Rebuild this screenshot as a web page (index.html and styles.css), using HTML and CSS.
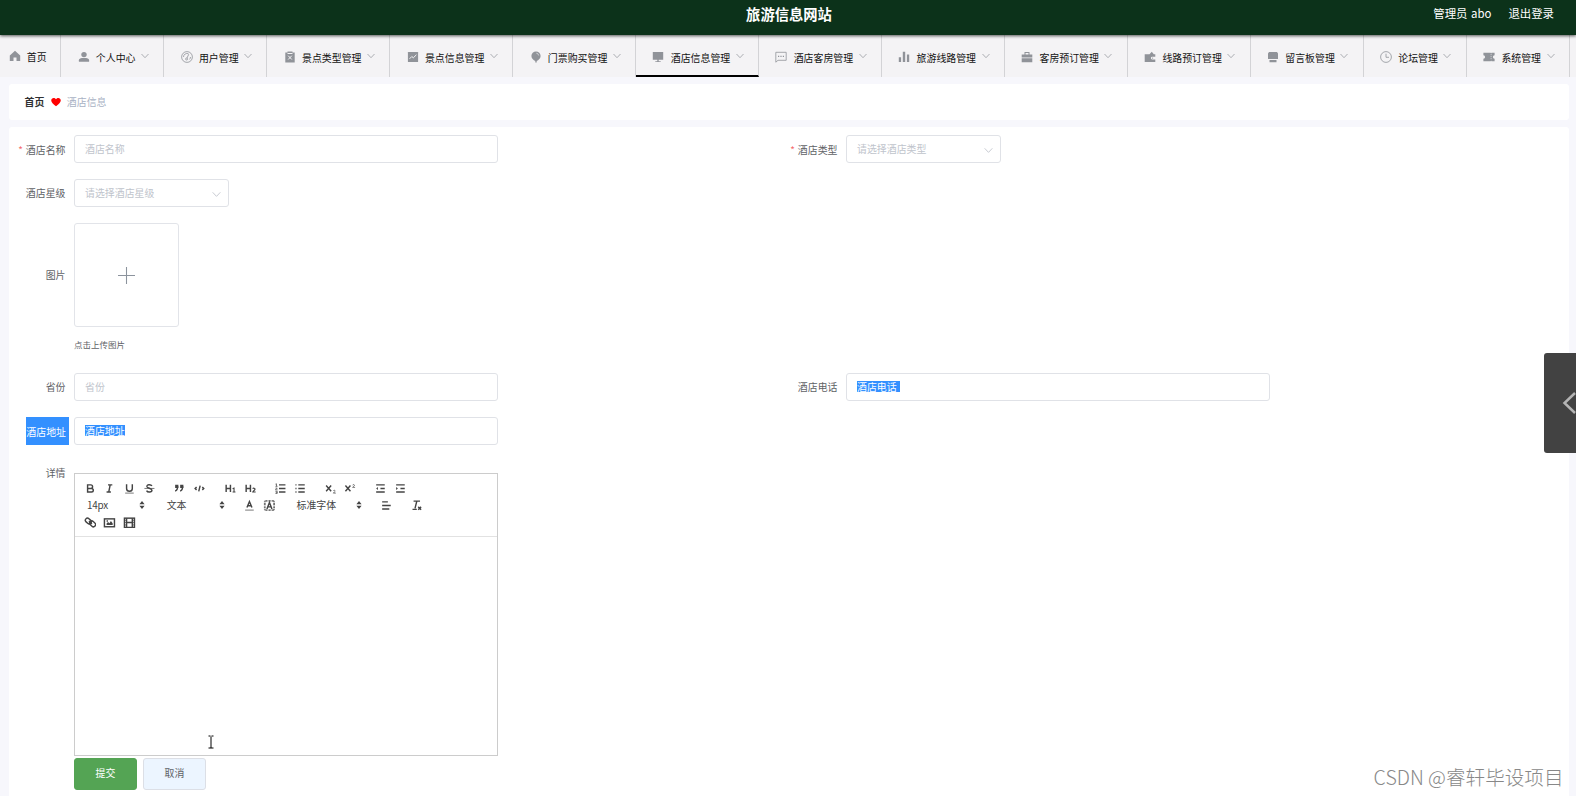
FILE: index.html
```html
<!DOCTYPE html>
<html lang="zh-CN">
  <head>
    <meta charset="UTF-8" />
    <meta name="viewport" content="width=device-width, initial-scale=1.0" />
    <title>旅游信息网站</title>
    <link rel="stylesheet" href="styles.css">
  </head>
  <body>
    <svg class="defs">
      <symbol id="arrow" viewBox="0 0 10 10">
        <path d="M1.5 3L5 6.7 8.5 3" fill="none" stroke="currentColor" stroke-width="0.8" />
      </symbol>
      <symbol id="updown" viewBox="0 0 6 10">
        <path d="M.4 4.2L3 1l2.600 3.200zM.4 5.800h5.200L3 9z" fill="currentColor" />
      </symbol>
    </svg>

    <header class="header">
      <h1 class="title">旅游信息网站</h1>
      <div class="user-info">
        <span>管理员 abo</span>
        <a class="logout">退出登录</a>
      </div>
    </header>

    <nav class="menu">
      <a class="menu-item home">
        <svg class="menu-icon" viewBox="0 0 12 12"><path d="M6 .8L11.2 5.6V11H7.5V7.6h-3V11H.8V5.6z" /></svg>
        <span>首页</span>
      </a>
      <a class="menu-item">
        <svg class="menu-icon" viewBox="0 0 12 12"><circle cx="6" cy="3.600" r="2.700" /><path d="M.9 10.800V9.300C.9 7.800 2.300 7.300 4 7h4c1.700.3 3.100.8 3.100 2.300v1.500z" /></svg>
        <span>个人中心</span>
        <svg class="menu-arrow"><use href="#arrow" /></svg>
      </a>
      <a class="menu-item">
        <svg class="menu-icon line" viewBox="0 0 12 12"><circle cx="6" cy="6" r="5.400" /><path d="M2.500 6a3.500 3.500 0 0 1 5-3.200M9.500 6a3.500 3.500 0 0 1-1 2.400M6 7L7.800 3.200" /><circle cx="5.600" cy="8" r="1" /></svg>
        <span>用户管理</span>
        <svg class="menu-arrow"><use href="#arrow" /></svg>
      </a>
      <a class="menu-item">
        <svg class="menu-icon" viewBox="0 0 12 12"><path d="M1.300 1.500H3.500V.5h5v1h2.200v10H1.300z" /><path class="cut" d="M4.200 4.700l3.600 3.800M7.800 4.700L4.200 8.500M3.500 2.500h5" /></svg>
        <span>景点类型管理</span>
        <svg class="menu-arrow"><use href="#arrow" /></svg>
      </a>
      <a class="menu-item">
        <svg class="menu-icon" viewBox="0 0 12 12"><rect x=".9" y=".9" width="10.200" height="10.200" rx=".5" /><path class="cut" d="M2.600 7.800L4.800 5.500l1.500 1.300L9.400 3.800" /></svg>
        <span>景点信息管理</span>
        <svg class="menu-arrow"><use href="#arrow" /></svg>
      </a>
      <a class="menu-item">
        <svg class="menu-icon" viewBox="0 0 12 12"><path d="M6 .4a4.600 4.600 0 0 1 4.600 4.600C10.600 7.400 8.500 9.300 6.700 9.900v1.600H5.300V9.900C3.500 9.300 1.400 7.400 1.400 5A4.600 4.600 0 0 1 6 .4z" /><path class="cut thin" d="M6.300 2.200a2.600 2.600 0 0 1 2.400 2.300" /></svg>
        <span>门票购买管理</span>
        <svg class="menu-arrow"><use href="#arrow" /></svg>
      </a>
      <a class="menu-item active">
        <svg class="menu-icon" viewBox="0 0 12 12"><path d="M.8 1.100h10.400v7.700H.8zM5.300 8.800h1.400v1.400h2v.9H3.300v-.9h2z" /></svg>
        <span>酒店信息管理</span>
        <svg class="menu-arrow"><use href="#arrow" /></svg>
      </a>
      <a class="menu-item">
        <svg class="menu-icon line" viewBox="0 0 12 12"><path d="M.8 1.300h10.400v8H3L.8 11.200z" /><path d="M3 5.300h1.200M5.400 5.300h1.200M7.800 5.300H9" stroke-width="1.200" /></svg>
        <span>酒店客房管理</span>
        <svg class="menu-arrow"><use href="#arrow" /></svg>
      </a>
      <a class="menu-item">
        <svg class="menu-icon" viewBox="0 0 12 12"><path d="M.8 6.200h2.300V11H.8zM4.800.8h2.400V11H4.800zM8.900 3.500h2.300V11H8.900z" /></svg>
        <span>旅游线路管理</span>
        <svg class="menu-arrow"><use href="#arrow" /></svg>
      </a>
      <a class="menu-item">
        <svg class="menu-icon" viewBox="0 0 12 12"><path d="M3.500 3.500V1h5v2.500h2.800v3H.7v-3zM4.500 3.500h3V2h-3zM.7 7.300h10.600v3.900H.7z" fill-rule="evenodd" /></svg>
        <span>客房预订管理</span>
        <svg class="menu-arrow"><use href="#arrow" /></svg>
      </a>
      <a class="menu-item">
        <svg class="menu-icon" viewBox="0 0 12 12"><path d="M.7 3.200h4.800L7.800.8l2 2.400h1.500v2.600H8.200a1.300 1.300 0 0 0 0 2.600h3.100v2.700H.7z" /><circle cx="8.600" cy="7.100" r=".6" /></svg>
        <span>线路预订管理</span>
        <svg class="menu-arrow"><use href="#arrow" /></svg>
      </a>
      <a class="menu-item">
        <svg class="menu-icon" viewBox="0 0 12 12"><path d="M2 .9h8l1 1.500V8H1V2.400zM2.500 8.900h7v2.300h-7z" /></svg>
        <span>留言板管理</span>
        <svg class="menu-arrow"><use href="#arrow" /></svg>
      </a>
      <a class="menu-item">
        <svg class="menu-icon line" viewBox="0 0 12 12"><circle cx="6" cy="6" r="5.400" /><path d="M6 2.700V6.300h3" /></svg>
        <span>论坛管理</span>
        <svg class="menu-arrow"><use href="#arrow" /></svg>
      </a>
      <a class="menu-item">
        <svg class="menu-icon" viewBox="0 0 12 12"><path d="M.4 1.700h7.300l.4.900.4-.9h3.100v2.600a1.700 1.700 0 0 0 0 3.400v2.600H8.500l-.4-.9-.4.900H.4V7.700a1.700 1.700 0 0 0 0-3.400z" /><path class="cut thin" d="M8.100 3v6" stroke-dasharray="1.200 .8" /></svg>
        <span>系统管理</span>
        <svg class="menu-arrow"><use href="#arrow" /></svg>
      </a>
    </nav>

    <main class="main">
      <div class="breadcrumb">
        <span class="crumb-home">首页</span>
        <svg class="heart" viewBox="0 0 10 10"><path d="M5 9.300C2.200 7.200.2 5.600.2 3.300.2.800 3.500 0 5 2.200 6.500 0 9.800.8 9.800 3.300 9.800 5.600 7.800 7.200 5 9.300z" /></svg>
        <span class="crumb-current">酒店信息</span>
      </div>

      <form class="card">
        <div class="row">
          <div class="form-item">
            <label class="required">酒店名称</label>
            <input class="input" type="text" placeholder="酒店名称" />
          </div>
          <div class="form-item">
            <label class="required">酒店类型</label>
            <div class="input select">
              <span>请选择酒店类型</span>
              <svg class="select-arrow"><use href="#arrow" /></svg>
            </div>
          </div>
        </div>

        <div class="row">
          <div class="form-item">
            <label>酒店星级</label>
            <div class="input select">
              <span>请选择酒店星级</span>
              <svg class="select-arrow"><use href="#arrow" /></svg>
            </div>
          </div>
        </div>

        <div class="row upload-row">
          <div class="form-item">
            <label>图片</label>
            <div class="upload">
              <svg viewBox="0 0 16 16"><path d="M8 0v16M0 8h16" /></svg>
            </div>
          </div>
          <div class="upload-tip">点击上传图片</div>
        </div>

        <div class="row">
          <div class="form-item">
            <label>省份</label>
            <input class="input" type="text" placeholder="省份" />
          </div>
          <div class="form-item">
            <label>酒店电话</label>
            <div class="input"><span class="selected with-tail">酒店电话</span></div>
          </div>
        </div>

        <div class="row">
          <div class="form-item">
            <label class="selected-label">酒店地址</label>
            <div class="input"><span class="selected">酒店地址</span></div>
          </div>
        </div>

        <div class="form-item editor-item">
          <label>详情</label>
          <div class="editor">
            <div class="toolbar">
              <div class="formats">
                <span class="group">
                  <svg viewBox="0 0 18 18"><path d="M5 4h4.500a2.500 2.500 0 0 1 0 5H5zM5 9h5.500a2.500 2.500 0 0 1 0 5H5z" /></svg>
                  <svg viewBox="0 0 18 18"><path d="M7 4h6M5 14h6M8 14l2-10" /></svg>
                  <svg viewBox="0 0 18 18"><path d="M5 3v6a4 4 0 0 0 8 0V3" /><path class="slim" d="M3 15.500h12" /></svg>
                  <svg viewBox="0 0 18 18"><path class="slim" d="M2 9h14" /><path d="M12.500 5.500C11 3 5 3 5.500 6.500 6 9 12.500 8.500 12.500 11.500c0 3-6 3.500-7.500.5" /></svg>
                </span>
                <span class="group">
                  <svg viewBox="0 0 18 18"><path class="solid" d="M3 4h4.500v4.500H3zM10 4h4.500v4.500H10z" /><path d="M6.500 6c0 4-1 6-3.500 6.500M13.500 6c0 4-1 6-3.500 6.500" /></svg>
                  <svg viewBox="0 0 18 18"><path d="M5 7L3 9l2 2M13 7l2 2-2 2M10 5L8 13" /></svg>
                </span>
                <span class="group">
                  <svg viewBox="0 0 18 18"><path d="M3 4v10M9 4v10M3 9h6" /><path class="mid" d="M12 9.500l2-1V14M12 14h4" /></svg>
                  <svg viewBox="0 0 18 18"><path d="M3 4v10M9 4v10M3 9h6" /><path class="mid" d="M12.300 9.500c.5-1.500 3.500-1 3 1-.3 1-2.500 2-3 3.500h4" /></svg>
                </span>
                <span class="group">
                  <svg viewBox="0 0 18 18"><path d="M7 4h9M7 9h9M7 14h9" /><path class="slim" d="M2 3l1.500-.5V6M2 6h3M2 8.500h2.500L2 11h3M2 13h2.500v3H2M2.500 14.500h2" /></svg>
                  <svg viewBox="0 0 18 18"><path d="M6 4h9M6 9h9M6 14h9M2 4h1.500M2 9h1.500M2 14h1.500" /></svg>
                </span>
                <span class="group">
                  <svg viewBox="0 0 18 18"><path d="M3 5l7 8M10 5l-7 8" /><path class="slim" d="M13 12.500c.5-1.500 3-1 2.500.5-.3.700-2 1.500-2.500 2.500h3.500" /></svg>
                  <svg viewBox="0 0 18 18"><path d="M2 5l7 8M9 5l-7 8" /><path class="slim" d="M12 4.500c.5-1.500 3-1 2.500.5-.3.700-2 1.500-2.500 2.500h3.500" /></svg>
                </span>
                <span class="group">
                  <svg viewBox="0 0 18 18"><path d="M3 14h12M3 4h12M9 9h6" /><path class="solid" d="M5.500 7v4L3 9z" /></svg>
                  <svg viewBox="0 0 18 18"><path d="M3 14h12M3 4h12M9 9h6" /><path class="solid" d="M3 7v4l2.500-2z" /></svg>
                </span>
              </div>
              <div class="formats">
                <span class="group picker"><span class="latin">14px</span><svg class="updown"><use href="#updown" /></svg></span>
                <span class="group picker"><span>文本</span><svg class="updown"><use href="#updown" /></svg></span>
                <span class="group">
                  <svg viewBox="0 0 18 18"><path class="slim" d="M3 15.500h12" /><path d="M5.500 12L9 3.500l3.500 8.500M6.800 9.500h4.400" /></svg>
                  <svg viewBox="0 0 18 18"><rect class="dots" x="2.500" y="2.500" width="13" height="13" /><path d="M5.500 14L9 5l3.500 9M6.800 11h4.400" /></svg>
                </span>
                <span class="group picker font"><span>标准字体</span><svg class="updown"><use href="#updown" /></svg></span>
                <span class="group"><svg viewBox="0 0 18 18"><path d="M3 4h8M3 9h12M3 14h10" /></svg></span>
                <span class="group"><svg viewBox="0 0 18 18"><path d="M5 3h9M9.500 3L7 13M3.500 14.500h6M11.500 11l4 4M15.500 11l-4 4" /></svg></span>
              </div>
              <div class="formats">
                <span class="group">
                  <svg viewBox="0 0 18 18"><rect x="1.500" y="4" width="9" height="6" rx="3" transform="rotate(42 6 7)" /><rect x="7.500" y="8" width="9" height="6" rx="3" transform="rotate(42 12 11)" /><path d="M7 7l4 4" /></svg>
                  <svg viewBox="0 0 18 18"><rect x="2" y="4" width="14" height="11" /><path class="solid" d="M5 12.500v-2l2-2 2 1.500 2-3 2.500 3v2.500zM5 6h2v2H5z" /></svg>
                  <svg viewBox="0 0 18 18"><rect x="2" y="3" width="14" height="13" /><path d="M5 3v13M13 3v13M5 9h8" /><path class="slim" d="M2 6h3M2 9h3M2 12.500h3M13 6h3M13 9h3M13 12.500h3" /></svg>
                </span>
              </div>
            </div>
            <div class="editor-body">
              <svg class="ibeam" viewBox="0 0 6 14"><path d="M.5 1H2.500M3.500 1H5.500M3 1.500V13M.5 13H5.500" /></svg>
            </div>
          </div>
        </div>

        <div class="buttons">
          <button class="btn submit" type="button">提交</button>
          <button class="btn cancel" type="button">取消</button>
        </div>
      </form>
    </main>

    <div class="drawer-handle">
      <svg viewBox="0 0 14 24"><path d="M13 2L2.500 12 13 22" /></svg>
    </div>
    <div class="watermark">CSDN @睿轩毕设项目</div>
  </body>
</html>
```
FILE: styles.css
```css
* {
  margin: 0;
  padding: 0;
  box-sizing: border-box;
}

body {
  height: 796px;
  overflow: hidden;
  background: #f7f7fc;
  color: #606266;
  font-family: "Noto Sans CJK SC", "Noto Sans", sans-serif;
  font-size: 9.92px;
  line-height: 1.4;
}

.defs {
  display: none;
}

/* header */
.header {
  position: relative;
  z-index: 1;
  display: grid;
  grid-template-columns: 1fr auto 1fr;
  align-items: center;
  height: 35px;
  padding: 0 22px 7px 24px;
  background: #0c321a;
  color: #fff;
  box-shadow: 0 1px 3px rgba(0, 0, 0, 0.65);
}

.title {
  grid-column: 2;
  font-size: 14.3px;
  font-weight: 700;
}

.user-info {
  display: flex;
  justify-content: flex-end;
  gap: 17px;
  font-size: 11.4px;
  word-spacing: 1px;
}

/* menu */
.menu {
  display: flex;
  height: 42px;
  background: #f4f3f5;
  color: #111;
}

.menu-item {
  display: flex;
  flex: none;
  align-items: center;
  height: 42px;
  padding: 3px 14.1px 0 16.25px;
  border-right: 1px solid #d3d3d6;
  white-space: nowrap;
}

.menu-item.home {
  width: 61.3px;
  padding: 2px 0 0 8.5px;
}

.menu-item.active {
  border-bottom: 2px solid #000;
  padding-top: 5px;
}

.menu-icon {
  flex: none;
  width: 12px;
  height: 12px;
  margin: -2px 6.3px 0 0;
  fill: #909399;
}

.menu-icon.line {
  fill: none;
  stroke: #909399;
  stroke-width: 0.8;
}

.menu-icon .cut {
  fill: none;
  stroke: #f4f3f5;
  stroke-width: 1;
}

.menu-icon .thin {
  stroke-width: 0.6;
}

.menu-arrow {
  flex: none;
  width: 10px;
  height: 10px;
  margin: -4px -0.7px 0 4.5px;
  color: #999ca2;
}

/* content */
.main {
  display: flex;
  flex-direction: column;
  gap: 7px;
  padding: 7px 7px 0 9px;
}

.breadcrumb {
  display: flex;
  align-items: center;
  height: 36px;
  padding: 0 15.5px;
  border-radius: 3px;
  background: #fff;
}

.crumb-home {
  color: #303133;
  font-weight: 700;
}

.heart {
  width: 10px;
  height: 10px;
  margin: 0 6px 0 6.5px;
  fill: #f00;
}

.crumb-current {
  color: #a9b2c4;
}

.card {
  height: 669px;
  padding: 8px 9px 0;
  border-radius: 3px 3px 0 0;
  background: #fff;
}

.row {
  display: grid;
  grid-template-columns: 772px 1fr;
  height: 44px;
}

.upload-row {
  grid-template-rows: 104px auto;
  height: 150px;
}

.form-item {
  display: flex;
  align-items: flex-start;
}

.form-item label {
  display: flex;
  flex: none;
  align-items: center;
  justify-content: flex-end;
  width: 56px;
  height: 28px;
  padding: 0 8.5px 0 0;
  white-space: nowrap;
}

.form-item .required {
  padding-top: 1px;
}

.required::before {
  content: "*";
  margin-right: 3px;
  color: #f56c6c;
}

.input {
  display: flex;
  align-items: center;
  width: 424px;
  height: 28px;
  padding: 0 10px 1px;
  border: 1px solid #e0e2e7;
  border-radius: 3px;
  background: #fff;
  font-family: inherit;
  font-size: 9.92px;
}

.input::placeholder {
  color: #c0c4cc;
}

.select {
  justify-content: space-between;
  width: 155px;
  padding-right: 6px;
  color: #c0c4cc;
}

.select-arrow {
  width: 11px;
  height: 11px;
  margin-top: 3px;
}

.selected {
  height: 11px;
  background: #3390ff;
  color: #fff;
  line-height: 11px;
}

.with-tail {
  padding-right: 3px;
}

/* label highlighted up to its padding edge */
.form-item .selected-label {
  width: 43px;
  margin: 0 5px 0 8px;
  padding: 1px 3px 0 0;
  background: #3390ff;
  color: #fff;
}

.upload-row .form-item {
  align-items: center;
}

.upload {
  display: flex;
  align-items: center;
  justify-content: center;
  width: 105px;
  height: 104px;
  border: 1px solid #e2e4e9;
  border-radius: 3px;
}

.upload svg {
  width: 17px;
  height: 17px;
  stroke: #8c939d;
}

.upload-tip {
  grid-row: 2;
  padding: 12px 0 0 56px;
  font-size: 8.5px;
}

/* rich text editor */
.editor-item {
  margin-top: 12px;
}

.editor-item label {
  height: 0;
}

.editor {
  width: 424px;
  height: 283px;
  border: 1px solid #ccc;
}

.toolbar {
  height: 63px;
  padding: 6px 5px 0;
  border-bottom: 1px solid #e2e2e2;
  color: #444;
}

.formats {
  display: flex;
  height: 16.8px;
}

.group {
  display: flex;
  flex: none;
  align-items: center;
  margin-right: 10.4px;
}

.group svg {
  width: 12.9px;
  height: 12.9px;
  margin: 0 3.5px;
  fill: none;
  stroke: #444;
  stroke-width: 2;
}

.group .slim {
  stroke-width: 1;
}

.group .mid {
  stroke-width: 1.5;
}

.group .solid {
  fill: #444;
  stroke: none;
}

.group .dots {
  stroke-width: 2.5;
  stroke-dasharray: 1 1;
}

.picker {
  justify-content: space-between;
  width: 69.3px;
  padding: 0 4px 1px 7px;
}

.picker.font {
  width: 76.3px;
}

.group .updown {
  width: 6px;
  height: 10px;
  margin: 0;
  stroke: none;
}

.latin {
  letter-spacing: -0.2px;
}

.editor-body {
  position: relative;
  height: 218px;
}

.ibeam {
  position: absolute;
  left: 133px;
  top: 198px;
  width: 6px;
  height: 14px;
  fill: none;
  stroke: #000;
}

.buttons {
  display: flex;
  gap: 6px;
  padding: 2px 0 0 56px;
}

.btn {
  width: 63px;
  height: 32px;
  padding-bottom: 3px;
  border: 1px solid #dcdfe6;
  border-radius: 3px;
  font-family: inherit;
  font-size: 9.92px;
}

.submit {
  border-color: #54a454;
  background: #54a454;
  color: #fff;
}

.cancel {
  background: #ecf5ff;
  color: #606266;
}

.drawer-handle {
  position: absolute;
  top: 353px;
  right: 0;
  display: flex;
  align-items: center;
  justify-content: flex-end;
  width: 32px;
  height: 100px;
  border-radius: 3px 0 0 3px;
  background: #424242;
}

.drawer-handle svg {
  width: 14px;
  height: 24px;
  fill: none;
  stroke: #b4b4b4;
  stroke-width: 2.5;
}

.watermark {
  position: absolute;
  right: 12.5px;
  bottom: 6px;
  color: #888;
  font-size: 19.6px;
  font-weight: 300;
  line-height: 27px;
  text-shadow: 1px 1px 0 #fff;
}
```
